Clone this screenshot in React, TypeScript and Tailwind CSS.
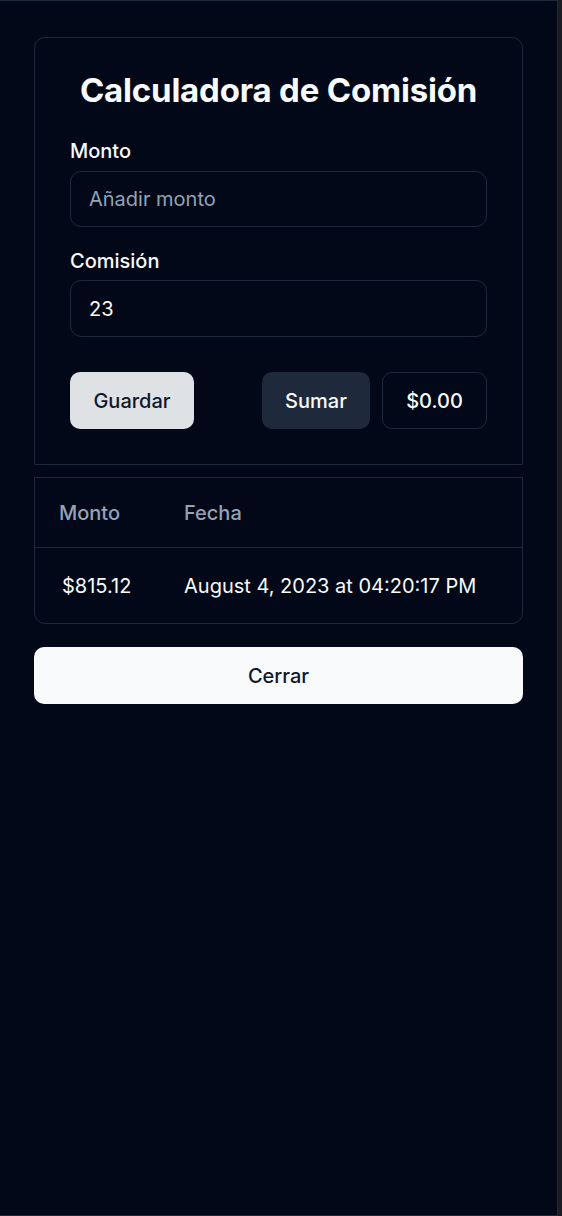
import React, { useState } from "react";

type Registro = {
  monto: string;
  fecha: string;
};

const registros: Registro[] = [
  { monto: "$815.12", fecha: "August 4, 2023 at 04:20:17 PM" },
];

export default function App() {
  const [monto, setMonto] = useState("");
  const [comision, setComision] = useState("23");
  const [total] = useState("$0.00");

  return (
    <div className="flex h-[1216px] w-[562px] bg-[#1a1c21] font-['Inter',sans-serif] antialiased">
      <div className="h-[1216px] w-[558px] border-y border-r border-[#1e293b] bg-[#020817] px-[34px] pt-[36px]">
        {/* CALCULADORA */}
        <div className="rounded-t-[11px] border border-[#1e293b] px-[35px] pt-[32px] pb-[35px]">
          <h1 className="text-center text-[33px] font-bold leading-[40px] tracking-[-0.2px] text-[#f8fafc]">
            Calculadora de Comisión
          </h1>

          <label className="mt-[31px] block text-[20px] font-medium leading-[20px] text-[#f8fafc]">
            Monto
          </label>
          <input
            value={monto}
            onChange={(e) => setMonto(e.target.value)}
            placeholder="Añadir monto"
            className="mt-[10px] block h-[56px] w-full rounded-[11px] border border-[#1e293b] bg-transparent px-[18px] text-[20px] text-[#f8fafc] outline-none placeholder:text-[#94a3b8]"
          />

          <label className="mt-[24px] block text-[20px] font-medium leading-[20px] text-[#f8fafc]">
            Comisión
          </label>
          <input
            value={comision}
            onChange={(e) => setComision(e.target.value)}
            className="mt-[9px] block h-[57px] w-full rounded-[11px] border border-[#1e293b] bg-transparent px-[18px] text-[20px] text-[#f8fafc] outline-none"
          />

          <div className="mt-[35px] flex items-center">
            <button className="h-[57px] w-[124px] rounded-[10px] bg-[#dfe2e4] text-[20px] font-medium text-[#0f172a]">
              Guardar
            </button>
            <div className="flex-1" />
            <div className="flex items-center gap-[12px]">
              <button className="h-[57px] w-[108px] rounded-[10px] bg-[#1e293b] text-[20px] font-medium text-[#f8fafc]">
                Sumar
              </button>
              <div className="flex h-[57px] w-[105px] items-center justify-center rounded-[10px] border border-[#1e293b] text-[20px] font-medium text-[#f8fafc]">
                {total}
              </div>
            </div>
          </div>
        </div>

        {/* HISTORIAL */}
        <div className="mt-[12px] rounded-b-[11px] border border-[#1e293b]">
          <div className="flex h-[70px] items-center border-b border-[#1e293b] text-[20px] font-medium text-[#94a3b8]">
            <div className="w-[149px] pl-[24px]">Monto</div>
            <div>Fecha</div>
          </div>
          {registros.map((r) => (
            <div
              key={r.fecha}
              className="flex h-[75px] items-center text-[20px] text-[#f8fafc]"
            >
              <div className="w-[149px] pl-[27px]">{r.monto}</div>
              <div>{r.fecha}</div>
            </div>
          ))}
        </div>

        <button className="mt-[23px] h-[57px] w-full rounded-[10px] bg-[#f8fafc] text-[20px] font-medium text-[#0f172a]">
          Cerrar
        </button>
      </div>
    </div>
  );
}
